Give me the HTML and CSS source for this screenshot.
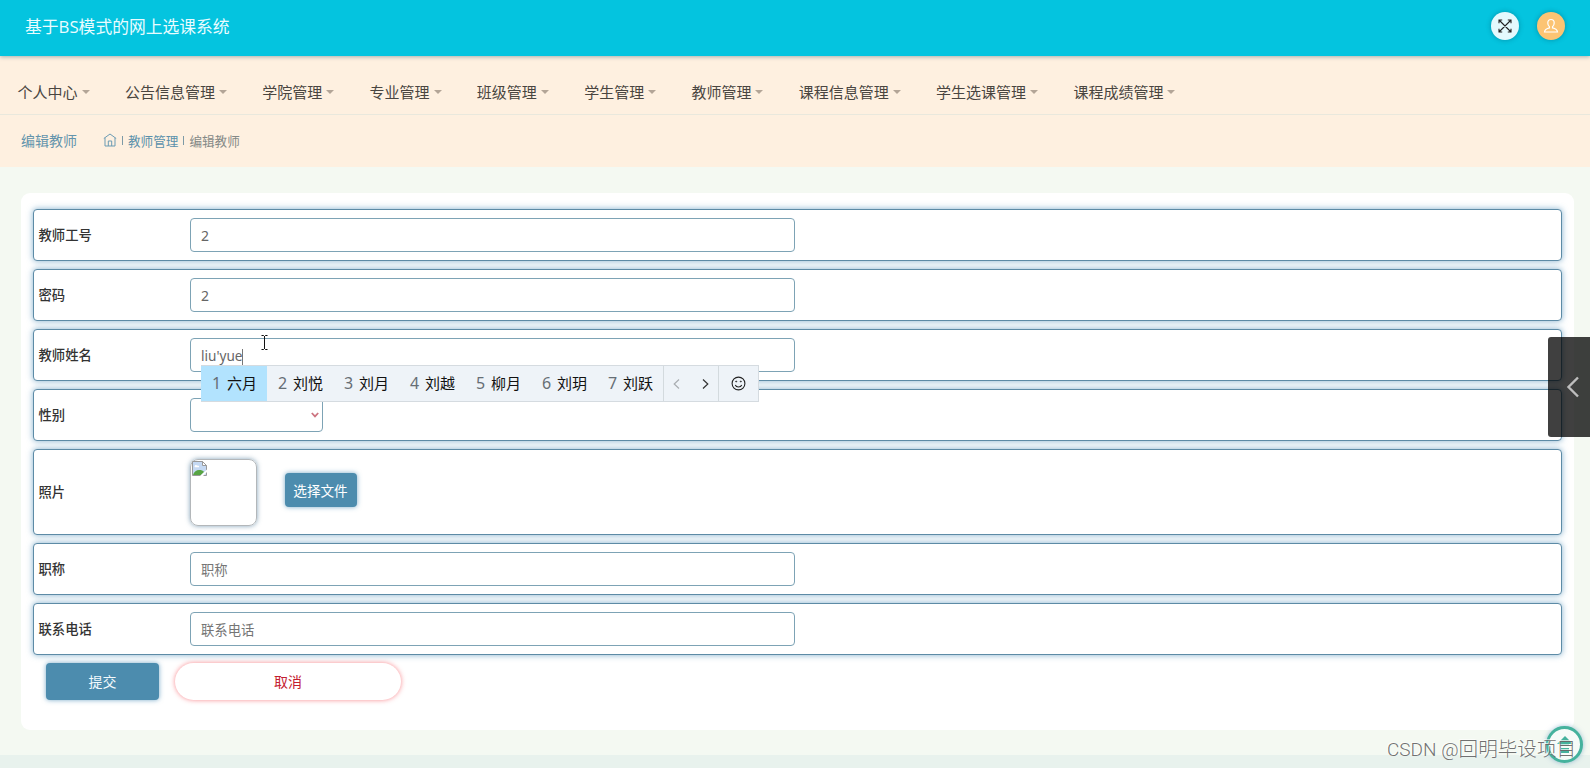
FILE: index.html
```html
<!DOCTYPE html>
<html lang="zh-CN">
<head>
<meta charset="utf-8">
<title>基于BS模式的网上选课系统</title>
<link rel="stylesheet" href="styles.css">
</head>
<body>
<header class="topbar">
  <h1 class="brand">基于BS模式的网上选课系统</h1>
  <div class="tools">
    <button class="round"><svg width="14" height="14" viewBox="0 0 14 14" fill="none" stroke="#222" stroke-width="1.1"><path d="M1.5 1.5l11 11M12.5 1.5l-11 11M1 4.200V1h3.200M9.800 1H13v3.200M13 9.800V13H9.800M4.200 13H1V9.800"/></svg></button>
    <button class="round avatar"><svg width="16" height="16" viewBox="0 0 16 16" fill="none" stroke="#fff" stroke-width="1.200"><path d="M8 1.500c-2 0-3.200 1.400-3.200 3.400 0 1.700.7 3 1.700 3.800v1.200C3.800 10.500 1.800 11.800 1.500 14h13c-.3-2.200-2.300-3.500-5-4.100V8.700c1-.8 1.700-2.100 1.700-3.800 0-2-1.200-3.400-3.200-3.400z"/></svg></button>
  </div>
</header>
<nav class="menu">
  <a class="item">个人中心<i class="caret"></i></a>
  <a class="item">公告信息管理<i class="caret"></i></a>
  <a class="item">学院管理<i class="caret"></i></a>
  <a class="item">专业管理<i class="caret"></i></a>
  <a class="item">班级管理<i class="caret"></i></a>
  <a class="item">学生管理<i class="caret"></i></a>
  <a class="item">教师管理<i class="caret"></i></a>
  <a class="item">课程信息管理<i class="caret"></i></a>
  <a class="item">学生选课管理<i class="caret"></i></a>
  <a class="item">课程成绩管理<i class="caret"></i></a>
</nav>
<div class="crumbs">
  <h2 class="page-title">编辑教师</h2>
  <div class="trail">
    <svg class="home" width="14" height="14" viewBox="0 0 14 14" fill="none" stroke="#6b9bb3" stroke-width="1"><path d="M.8 5.500L7 1l6.200 4.500M2 4.800V13h10V4.800M5.300 13V8h3.400v5"/></svg>
    <i class="bar"></i><a class="link">教师管理</a><i class="bar"></i><span>编辑教师</span>
  </div>
</div>
<main class="content">
  <form class="card">
    <div class="row"><label class="label">教师工号</label><div class="field">2</div></div>
    <div class="row"><label class="label">密码</label><div class="field">2</div></div>
    <div class="row"><label class="label">教师姓名</label><div class="field"><span class="typing">liu'yue</span>
      <div class="ime">
        <div class="cand active"><b>1</b>六月</div><div class="cand"><b>2</b>刘悦</div><div class="cand"><b>3</b>刘月</div><div class="cand"><b>4</b>刘越</div><div class="cand"><b>5</b>柳月</div><div class="cand"><b>6</b>刘玥</div><div class="cand"><b>7</b>刘跃</div>
        <div class="pager">
          <svg width="7" height="12" viewBox="0 0 7 12" fill="none" stroke="#a9adb1" stroke-width="1.200"><path d="M6 1.500L1.200 6 6 10.500"/></svg>
          <svg width="7" height="12" viewBox="0 0 7 12" fill="none" stroke="#333" stroke-width="1.200"><path d="M1 1.500L5.800 6 1 10.500"/></svg>
        </div>
        <div class="emoji"><svg width="15" height="15" viewBox="0 0 15 15" fill="none" stroke="#222" stroke-width="1.100"><circle cx="7.500" cy="7.500" r="6.400"/><path d="M4.300 9c1 2.700 5.400 2.700 6.400 0"/><circle cx="5.200" cy="5.500" r=".6" fill="#222" stroke-width=".6"/><circle cx="9.800" cy="5.500" r=".6" fill="#222" stroke-width=".6"/></svg></div>
      </div></div></div>
    <div class="row"><label class="label">性别</label><div class="field select"><svg width="8" height="6" viewBox="0 0 8 6" fill="none" stroke="#cd7480" stroke-width="1.800"><path d="M.8 1L4 4.400 7.200 1"/></svg></div></div>
    <div class="row photo-row"><label class="label">照片</label>
      <div class="photo"><svg width="15" height="15" viewBox="0 0 15 15"><path d="M.5.500h10l4 4v10H.500z" fill="#c5d9f3" stroke="#9a9a9a"/><path d="M10.500.500v4h4z" fill="#fff" stroke="#9a9a9a"/><path d="M2.500 5.500c0-1.500 2-2 2.700-.8 1.600-.4 2.300.8 1.800 1.600H2.800z" fill="#fff"/><path d="M1 14c1-3.500 3.500-5 6-5s4 .5 5 2l-3 3z" fill="#58a444"/><path d="M8 15l7-6.500V11l-4 4z" fill="#fff"/></svg></div>
      <button type="button" class="upload">选择文件</button></div>
    <div class="row"><label class="label">职称</label><div class="field hint">职称</div></div>
    <div class="row"><label class="label">联系电话</label><div class="field hint">联系电话</div></div>
    <div class="actions"><button type="button" class="submit">提交</button><button type="button" class="cancel">取消</button></div>
  </form>
</main>
<footer class="foot"></footer>
<svg class="ibeam" width="7" height="15" viewBox="0 0 7 15" fill="none" stroke="#111"><path d="M.5.500H2.800M4.200.500h2.300M3.500 1v13M.5 14.500h2.300M4.200 14.500h2.300"/></svg>
<aside class="drawer"><svg width="14" height="22" viewBox="0 0 14 22" fill="none" stroke="#bdbdbd" stroke-width="2.400"><path d="M12 1.500L2.500 11l9.500 9.500"/></svg></aside>
<a class="to-top"><svg width="18" height="20" viewBox="0 0 18 20" fill="#45b29d"><path d="M9 1l8 8h-4v2H5V9H1zM5 13h8v5H5z"/></svg></a>
<div class="watermark"><span class="site">CSDN @</span>回明毕设项目</div>
</body>
</html>
```

FILE: styles.css
```css
* { box-sizing: border-box; }
body {
  margin: 0;
  width: 1590px;
  height: 768px;
  overflow: hidden;
  position: relative;
  display: flex;
  flex-direction: column;
  background: #f4f9f2;
  font-family: "Open Sans", "Noto Sans CJK SC", sans-serif;
  font-size: 13.33px;
  color: #333;
}
button { font: inherit; border: 0; padding: 0; }
.topbar {
  height: 56px;
  flex: none;
  display: flex;
  justify-content: space-between;
  padding: 0 25px;
  background: #04c4df;
  box-shadow: 0 1px 4px rgba(0, 60, 90, .35);
  position: relative;
}
.brand { margin: 0; font-size: 16.8px; font-weight: 400; line-height: 54px; color: #e9fcff; }
.tools { display: flex; gap: 18px; padding: 11.5px .5px 0 0; }
.round {
  width: 28px;
  height: 28px;
  border-radius: 50%;
  display: grid;
  place-items: center;
  background: #e4f9fd;
  box-shadow: 0 0 5px rgba(0, 70, 90, .4);
}
.avatar { background: #fcc473; }
.menu {
  height: 59px;
  flex: none;
  display: flex;
  gap: 35.300px;
  padding: 13px 0 0 17.6px;
  background: #fef0e0;
  border-bottom: 1px solid #e9e8dd;
  box-shadow: 0 1px 3px rgba(120, 150, 150, .15);
}
.item { display: flex; align-items: center; font-size: 15px; line-height: 44px; height: 45px; color: #494540; white-space: nowrap; }
.caret { margin-left: 4px; border: 4px solid transparent; border-top-color: #b3a597; border-bottom: 0; }
.crumbs {
  height: 52px;
  flex: none;
  display: flex;
  align-items: center;
  padding: 0 21px 2px;
  background: #fef0e0;
}
.page-title { margin: 0 26px 0 0; font-size: 14px; font-weight: 400; color: #6394ac; }
.trail { display: flex; align-items: center; font-size: 12.600px; color: #848987; }
.link { color: #5b90ab; }
.bar { width: 1px; height: 9px; margin: 0 5px; background: #7d9aa6; }
.content { flex: none; padding: 26px 16px 25px 21px; }
.card {
  height: 537px;
  padding: 16px 12px;
  border-radius: 9px;
  background: #fff;
  display: flex;
  flex-direction: column;
  gap: 8px;
}
.row {
  height: 52px;
  flex: none;
  display: flex;
  align-items: center;
  padding-left: 4.5px;
  border: 1px solid #5d8ba6;
  border-radius: 4px;
  background: #fff;
  box-shadow: 0 0 6px rgba(64, 134, 178, .65);
}
.label { width: 151.5px; padding-bottom: 2px; font-weight: 500; color: #333; }
.field {
  position: relative;
  width: 605px;
  height: 34px;
  padding: 0 10px;
  border: 1px solid #7da3b5;
  border-radius: 4px;
  font-family: "Noto Sans", "Noto Sans CJK SC", sans-serif;
  font-size: 14px;
  line-height: 34px;
  color: #666;
}
.hint { font-size: 13.33px; color: #757575; }
.select { width: 133px; display: flex; align-items: center; justify-content: flex-end; padding-right: 3px; }
.typing {
  display: inline-block;
  height: 19px;
  margin-top: 10px;
  line-height: 13px;
  width: 42px;
  font-size: 13.6px;
  vertical-align: top;
  border-bottom: 1px dotted #555;
  background: linear-gradient(#777, #777) right top / 1px 17px no-repeat;
}
.ime {
  position: absolute;
  z-index: 2;
  left: 10px;
  top: 26px;
  width: 558px;
  height: 37px;
  display: flex;
  border: 1px solid #d5dbe0;
  border-left: 0;
  background: #eef3f8;
  font-size: 15px;
  line-height: 35px;
  color: #111;
}
.cand { width: 66px; padding-left: 11px; display: flex; flex: none; white-space: nowrap; }
.cand b { width: 15px; flex: none; font-weight: 400; font-size: 16px; color: #666e75; }
.active { background: #b2e3fe; }
.pager { width: 55px; display: flex; align-items: center; justify-content: space-between; padding: 0 9px; border-left: 1px solid #d3dade; }
.emoji { flex: 1; display: grid; place-items: center; border-left: 1px solid #d3dade; }
.photo-row { height: 86px; }
.photo {
  width: 67px;
  height: 67px;
  padding: 1px;
  border: 1px solid #b3b7ba;
  border-radius: 8px;
  box-shadow: 0 0 5px rgba(64, 110, 145, .65);
}
.photo svg { display: block; }
.upload {
  width: 72px;
  height: 34px;
  margin: 0 0 4px 28px;
  padding: 0 1px 1px 0;
  border-radius: 4px;
  background: #4c8cae;
  color: #fff;
  font-size: 13.6px;
  box-shadow: 0 0 5px rgba(64, 134, 178, .7);
}
.actions { display: flex; align-items: center; gap: 16px; padding-left: 13px; }
.submit {
  width: 113px;
  height: 37px;
  padding-bottom: 2px;
  border-radius: 4px;
  background: #4c8cae;
  color: #f3fafd;
  font-size: 14px;
  box-shadow: 0 0 5px rgba(64, 134, 178, .7);
}
.cancel {
  width: 226px;
  height: 37px;
  padding-bottom: 2px;
  border-radius: 19px;
  background: #fff;
  color: #c4202f;
  font-size: 14px;
  box-shadow: 0 0 5px rgba(245, 60, 70, .6);
}
.foot { flex: 1; background: #e8f2ed; }
.ibeam { position: absolute; left: 261px; top: 335px; }
.drawer {
  position: absolute;
  z-index: 3;
  right: 0;
  top: 337px;
  width: 42px;
  height: 100px;
  padding-left: 18px;
  display: flex;
  align-items: center;
  border-radius: 3px 0 0 3px;
  background: rgba(0, 0, 0, .75);
}
.to-top {
  position: absolute;
  left: 1546px;
  top: 726px;
  width: 37px;
  height: 37px;
  display: grid;
  place-items: center;
  border: 3px solid #45b29d;
  border-radius: 50%;
  background: #f6fbf8;
  box-shadow: 0 0 5px rgba(64, 134, 178, .5);
}
.watermark {
  position: absolute;
  left: 1387px;
  top: 734px;
  font-family: "Liberation Sans", "Noto Sans CJK SC", sans-serif;
  font-size: 19.600px;
  font-weight: 300;
  line-height: 30px;
  white-space: nowrap;
  color: rgba(105, 105, 105, .95);
  text-shadow: -1px -1px 0 rgba(255, 255, 255, .7);
}
.site { font-family: Roboto, "Liberation Sans", sans-serif; font-size: 19px; }
```
